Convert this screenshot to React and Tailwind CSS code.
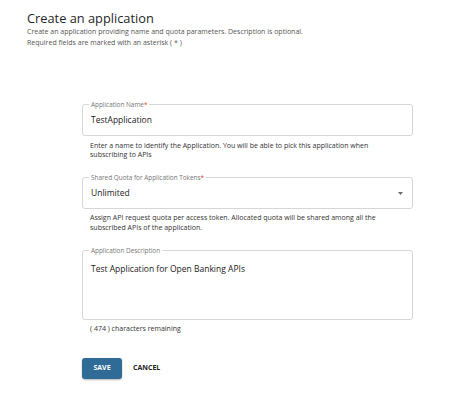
import React from "react";

function Outlined({ label, required, children, className }) {
  return (
    <div className={"relative rounded-[3px] border border-[#d6d6d6] " + className}>
      <span className="absolute left-[6px] top-[-5px] bg-white px-[2px] text-[6.4px] leading-[9px] text-[#757575]">
        {label}
        {required && <span className="text-[#e0452f]">*</span>}
      </span>
      {children}
    </div>
  );
}

export default function App() {
  return (
    <div className="min-h-[413px] w-[474px] bg-white text-[#222]" style={{ fontFamily: '"Open Sans", sans-serif' }}>
      <div className="pl-[27px] pt-[9px]">
        <h1 className="text-[12.8px] leading-[18px] text-[#1f1f1f]">Create an application</h1>
        <p className="text-[7px] leading-[10.5px] text-[#555]">
          Create an application providing name and quota parameters. Description is optional.
        </p>
        <p className="text-[7px] leading-[10.5px] text-[#555]">Required fields are marked with an asterisk ( * )</p>
      </div>

      <div className="ml-[82px] mt-[56px] w-[331px]">
        <Outlined label="Application Name" required className="h-[32px]">
          <div className="flex h-full items-center pl-[8px] text-[8.5px] text-[#222]">TestApplication</div>
        </Outlined>
        <p className="mt-[5px] pl-[8px] pr-[14px] text-[7px] leading-[9px] text-[#333]">
          Enter a name to identify the Application. You will be able to pick this application when subscribing to APIs
        </p>

        <Outlined label="Shared Quota for Application Tokens" required className="mt-[18px] h-[32px]">
          <div className="flex h-full items-center justify-between pl-[8px] pr-[9px] text-[8.5px] text-[#222]">
            <span>Unlimited</span>
            <svg width="5" height="3" viewBox="0 0 5 3">
              <path d="M0 0 L5 0 L2.5 3 Z" fill="#6b6b6b" />
            </svg>
          </div>
        </Outlined>
        <p className="mt-[4px] pl-[8px] pr-[14px] text-[7px] leading-[9.6px] text-[#333]">
          Assign API request quota per access token. Allocated quota will be shared among all the subscribed APIs of the application.
        </p>

        <Outlined label="Application Description" className="mt-[18px] h-[70px]">
          <div className="pl-[8px] pt-[12px] text-[8.5px] leading-[12px] text-[#222]">Test Application for Open Banking APIs</div>
        </Outlined>
        <p className="mt-[4px] pl-[8px] text-[7px] leading-[9px] text-[#333]">( 474 ) characters remaining</p>

        <div className="mt-[25px] flex items-center gap-[11px]">
          <button className="h-[21px] w-[40px] rounded-[3px] bg-[#2f6b96] text-[7px] font-bold text-white shadow-[0_1px_2px_rgba(0,0,0,0.3)]">
            SAVE
          </button>
          <button className="text-[7px] font-bold text-[#222]">CANCEL</button>
        </div>
      </div>
    </div>
  );
}
